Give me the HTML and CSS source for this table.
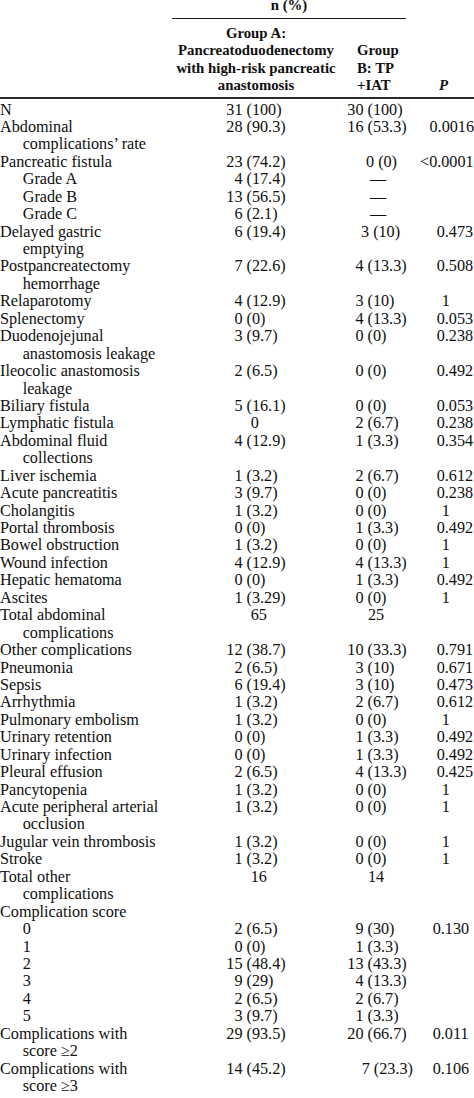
FILE: index.html
```html
<!DOCTYPE html>
<html lang="en">
<head>
<meta charset="utf-8">
<title>Complications</title>
<link rel="stylesheet" href="styles.css">
</head>
<body>
<table class="tbl">
  <colgroup>
    <col class="c-lab"><col class="c-a"><col class="c-b"><col class="c-p">
  </colgroup>
  <thead>
    <tr class="h1">
      <th></th><th colspan="2" class="span">n (%)</th><th></th>
    </tr>
    <tr class="h2">
      <th></th>
      <th class="ha">Group A:<br>Pancreatoduodenectomy<br>with high-risk pancreatic<br>anastomosis</th>
      <th class="hb">Group<br>B: TP<br>+IAT</th>
      <th class="hp"><i>P</i></th>
    </tr>
  </thead>
  <tbody>
    <tr><td class="lab">N</td><td class="va"><span class="n">31</span> (100)</td><td class="vb"><span class="n">30</span> (100)</td><td></td></tr>
    <tr><td class="lab">Abdominal<br>complications’ rate</td><td class="va"><span class="n">28</span> (90.3)</td><td class="vb"><span class="n">16</span> (53.3)</td><td class="p p-x">0.0016</td></tr>
    <tr><td class="lab">Pancreatic fistula</td><td class="va"><span class="n">23</span> (74.2)</td><td class="vb off10">0 (0)</td><td class="p p-lt">&lt;0.0001</td></tr>
    <tr><td class="sub">Grade A</td><td class="va"><span class="n">4</span> (17.4)</td><td class="dash">—</td><td></td></tr>
    <tr><td class="sub">Grade B</td><td class="va"><span class="n">13</span> (56.5)</td><td class="dash">—</td><td></td></tr>
    <tr><td class="sub">Grade C</td><td class="va"><span class="n">6</span> (2.1)</td><td class="dash">—</td><td></td></tr>
    <tr><td class="lab">Delayed gastric<br>emptying</td><td class="va"><span class="n">6</span> (19.4)</td><td class="vb off5">3 (10)</td><td class="p">0.473</td></tr>
    <tr><td class="lab">Postpancreatectomy<br>hemorrhage</td><td class="va"><span class="n">7</span> (22.6)</td><td class="vb"><span class="n">4</span> (13.3)</td><td class="p">0.508</td></tr>
    <tr><td class="lab">Relaparotomy</td><td class="va"><span class="n">4</span> (12.9)</td><td class="vb"><span class="n">3</span> (10)</td><td class="p p-one">1</td></tr>
    <tr><td class="lab">Splenectomy</td><td class="va"><span class="n">0</span> (0)</td><td class="vb"><span class="n">4</span> (13.3)</td><td class="p">0.053</td></tr>
    <tr><td class="lab">Duodenojejunal<br>anastomosis leakage</td><td class="va"><span class="n">3</span> (9.7)</td><td class="vb"><span class="n">0</span> (0)</td><td class="p">0.238</td></tr>
    <tr><td class="lab">Ileocolic anastomosis<br>leakage</td><td class="va"><span class="n">2</span> (6.5)</td><td class="vb"><span class="n">0</span> (0)</td><td class="p">0.492</td></tr>
    <tr><td class="lab">Biliary fistula</td><td class="va"><span class="n">5</span> (16.1)</td><td class="vb"><span class="n">0</span> (0)</td><td class="p">0.053</td></tr>
    <tr><td class="lab">Lymphatic fistula</td><td class="ca">0</td><td class="vb"><span class="n">2</span> (6.7)</td><td class="p">0.238</td></tr>
    <tr><td class="lab">Abdominal fluid<br>collections</td><td class="va"><span class="n">4</span> (12.9)</td><td class="vb"><span class="n">1</span> (3.3)</td><td class="p">0.354</td></tr>
    <tr><td class="lab">Liver ischemia</td><td class="va"><span class="n">1</span> (3.2)</td><td class="vb"><span class="n">2</span> (6.7)</td><td class="p">0.612</td></tr>
    <tr><td class="lab">Acute pancreatitis</td><td class="va"><span class="n">3</span> (9.7)</td><td class="vb"><span class="n">0</span> (0)</td><td class="p">0.238</td></tr>
    <tr><td class="lab">Cholangitis</td><td class="va"><span class="n">1</span> (3.2)</td><td class="vb"><span class="n">0</span> (0)</td><td class="p p-one">1</td></tr>
    <tr><td class="lab">Portal thrombosis</td><td class="va"><span class="n">0</span> (0)</td><td class="vb"><span class="n">1</span> (3.3)</td><td class="p">0.492</td></tr>
    <tr><td class="lab">Bowel obstruction</td><td class="va"><span class="n">1</span> (3.2)</td><td class="vb"><span class="n">0</span> (0)</td><td class="p p-one">1</td></tr>
    <tr><td class="lab">Wound infection</td><td class="va"><span class="n">4</span> (12.9)</td><td class="vb"><span class="n">4</span> (13.3)</td><td class="p p-one">1</td></tr>
    <tr><td class="lab">Hepatic hematoma</td><td class="va"><span class="n">0</span> (0)</td><td class="vb"><span class="n">1</span> (3.3)</td><td class="p">0.492</td></tr>
    <tr><td class="lab">Ascites</td><td class="va"><span class="n">1</span> (3.29)</td><td class="vb"><span class="n">0</span> (0)</td><td class="p p-one">1</td></tr>
    <tr><td class="lab">Total abdominal<br>complications</td><td class="ca">65</td><td class="cb">25</td><td></td></tr>
    <tr><td class="lab">Other complications</td><td class="va"><span class="n">12</span> (38.7)</td><td class="vb"><span class="n">10</span> (33.3)</td><td class="p">0.791</td></tr>
    <tr><td class="lab">Pneumonia</td><td class="va"><span class="n">2</span> (6.5)</td><td class="vb"><span class="n">3</span> (10)</td><td class="p">0.671</td></tr>
    <tr><td class="lab">Sepsis</td><td class="va"><span class="n">6</span> (19.4)</td><td class="vb"><span class="n">3</span> (10)</td><td class="p">0.473</td></tr>
    <tr><td class="lab">Arrhythmia</td><td class="va"><span class="n">1</span> (3.2)</td><td class="vb"><span class="n">2</span> (6.7)</td><td class="p">0.612</td></tr>
    <tr><td class="lab">Pulmonary embolism</td><td class="va"><span class="n">1</span> (3.2)</td><td class="vb"><span class="n">0</span> (0)</td><td class="p p-one">1</td></tr>
    <tr><td class="lab">Urinary retention</td><td class="va"><span class="n">0</span> (0)</td><td class="vb"><span class="n">1</span> (3.3)</td><td class="p">0.492</td></tr>
    <tr><td class="lab">Urinary infection</td><td class="va"><span class="n">0</span> (0)</td><td class="vb"><span class="n">1</span> (3.3)</td><td class="p">0.492</td></tr>
    <tr><td class="lab">Pleural effusion</td><td class="va"><span class="n">2</span> (6.5)</td><td class="vb"><span class="n">4</span> (13.3)</td><td class="p">0.425</td></tr>
    <tr><td class="lab">Pancytopenia</td><td class="va"><span class="n">1</span> (3.2)</td><td class="vb"><span class="n">0</span> (0)</td><td class="p p-one">1</td></tr>
    <tr><td class="lab">Acute peripheral arterial<br>occlusion</td><td class="va"><span class="n">1</span> (3.2)</td><td class="vb"><span class="n">0</span> (0)</td><td class="p p-one">1</td></tr>
    <tr><td class="lab">Jugular vein thrombosis</td><td class="va"><span class="n">1</span> (3.2)</td><td class="vb"><span class="n">0</span> (0)</td><td class="p p-one">1</td></tr>
    <tr><td class="lab">Stroke</td><td class="va"><span class="n">1</span> (3.2)</td><td class="vb"><span class="n">0</span> (0)</td><td class="p p-one">1</td></tr>
    <tr><td class="lab">Total other<br>complications</td><td class="ca">16</td><td class="cb">14</td><td></td></tr>
    <tr><td class="lab">Complication score</td><td></td><td></td><td></td></tr>
    <tr><td class="sub">0</td><td class="va"><span class="n">2</span> (6.5)</td><td class="vb"><span class="n">9</span> (30)</td><td class="p p-w">0.130</td></tr>
    <tr><td class="sub">1</td><td class="va"><span class="n">0</span> (0)</td><td class="vb"><span class="n">1</span> (3.3)</td><td></td></tr>
    <tr><td class="sub">2</td><td class="va"><span class="n">15</span> (48.4)</td><td class="vb"><span class="n">13</span> (43.3)</td><td></td></tr>
    <tr><td class="sub">3</td><td class="va"><span class="n">9</span> (29)</td><td class="vb"><span class="n">4</span> (13.3)</td><td></td></tr>
    <tr><td class="sub">4</td><td class="va"><span class="n">2</span> (6.5)</td><td class="vb"><span class="n">2</span> (6.7)</td><td></td></tr>
    <tr><td class="sub">5</td><td class="va"><span class="n">3</span> (9.7)</td><td class="vb"><span class="n">1</span> (3.3)</td><td></td></tr>
    <tr><td class="lab">Complications with<br>score ≥2</td><td class="va"><span class="n">29</span> (93.5)</td><td class="vb"><span class="n">20</span> (66.7)</td><td class="p p-w">0.011</td></tr>
    <tr><td class="lab">Complications with<br>score ≥3</td><td class="va"><span class="n">14</span> (45.2)</td><td class="vb off6">7 (23.3)</td><td class="p p-w">0.106</td></tr>
  </tbody>
</table>
</body>
</html>
```

FILE: styles.css
```css
html, body {
  margin: 0;
  padding: 0;
  background: #ffffff;
}

body {
  color: #0f0f0f;
  font-family: "Liberation Serif", "Times New Roman", serif;
}

.tbl {
  table-layout: fixed;
  width: 474px;
  border-collapse: separate;
  border-spacing: 0;
}

.c-lab { width: 172px; }
.c-a { width: 168px; }
.c-b { width: 66px; }
.c-p { width: 68px; }

.tbl th,
.tbl td {
  padding: 0;
  white-space: nowrap;
}

/* header */
.tbl th {
  font-size: 14.8px;
  font-weight: bold;
  line-height: 17.2px;
  vertical-align: bottom;
  text-align: left;
}

.tbl .h1 th {
  line-height: 10px;
  padding-bottom: 8.3px;
}

.tbl .h1 .span {
  text-align: center;
  border-bottom: 1.6px solid #1e1e1e;
}

.tbl .h2 th {
  padding-top: 5.9px;
  padding-bottom: 3px;
  border-bottom: 2.6px solid #2a2a2a;
}

.tbl .h2 .ha {
  text-align: center;
}

.tbl .h2 .hb {
  padding-left: 17px;
}

.tbl .h2 .hp {
  padding-left: 33px;
}

/* body */
.tbl td {
  font-size: 16.2px;
  line-height: 17.43px;
  vertical-align: top;
}

.tbl tbody tr:first-child td {
  padding-top: 2.5px;
}

.tbl td.lab {
  padding-left: 22.7px;
  text-indent: -22.7px;
}

.tbl td.sub {
  padding-left: 22.7px;
}

.n {
  display: inline-block;
  width: 20px;
  text-align: right;
  text-indent: 0;
}

.tbl td.va { padding-left: 50.5px; }
.tbl td.vb { padding-left: 3.5px; }
.tbl td.vb.off10 { padding-left: 26px; }
.tbl td.vb.off5 { padding-left: 21px; }
.tbl td.vb.off6 { padding-left: 21.7px; }
.tbl td.dash { padding-left: 30px; }
.tbl td.ca { padding-left: 78.7px; }
.tbl td.cb { padding-left: 28px; }

.tbl td.p { padding-left: 30.7px; }
.tbl td.p.p-w { padding-left: 26.7px; }
.tbl td.p.p-x { padding-left: 23.5px; }
.tbl td.p.p-lt { padding-left: 14px; }
.tbl td.p.p-one { padding-left: 35.7px; }
```
